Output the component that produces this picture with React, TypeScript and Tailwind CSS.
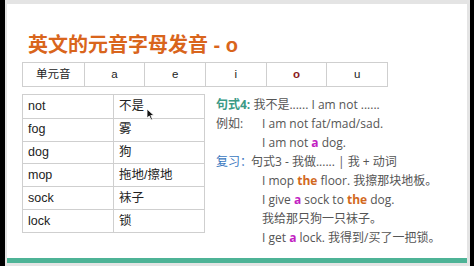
import React from "react";

const cjk = '"Noto Sans CJK SC"';
const A = ({ children }: { children: React.ReactNode }) => (
  <span className="font-bold text-[#c21fc2]">{children}</span>
);
const T = ({ children }: { children: React.ReactNode }) => (
  <span className="font-bold text-[#d2691e]">{children}</span>
);

export default function App() {
  const vowels = ["单元音", "a", "e", "i", "o", "u"];
  const words: [string, string][] = [
    ["not", "不是"],
    ["fog", "雾"],
    ["dog", "狗"],
    ["mop", "拖地/擦地"],
    ["sock", "袜子"],
    ["lock", "锁"],
  ];
  return (
    <div className="w-[474px] h-[266px] bg-black flex overflow-hidden">
      <div className="ml-[5px] w-[465px] h-full bg-[#e4e4e4] pl-[2px] pr-[3px] pt-[4px] pb-[3px] flex flex-col">
        <div className="relative flex-1 min-h-0 bg-white flex flex-col overflow-hidden">
          <div className="flex-1 min-h-0 flex flex-col pl-[15px]">
            <div
              className="mt-[29px] ml-[6px] h-[24px] text-[20px] leading-[24px] font-bold text-[#d9651c]"
              style={{ fontFamily: `"Liberation Sans", ${cjk}, sans-serif` }}
            >
              英文的元音字母发音 - o
            </div>
            <div
              className="mt-[5px] flex w-[366px] border border-[#cfcfcf] h-[25px]"
              style={{ fontFamily: `"Liberation Sans", ${cjk}, sans-serif` }}
            >
              {vowels.map((v, i) => (
                <div
                  key={v}
                  className={`w-[61px] flex items-center justify-center text-[11.5px] ${
                    i > 0 ? "border-l border-[#cfcfcf]" : ""
                  } ${v === "o" ? "font-bold text-[#8b1a1a]" : "text-[#222]"}`}
                >
                  {v}
                </div>
              ))}
            </div>
            <div className="mt-[7px] flex">
              <div
                className="w-[183px] h-[139px] shrink-0 border border-[#cfcfcf] flex flex-col"
                style={{ fontFamily: `"Liberation Sans", ${cjk}, sans-serif` }}
              >
                {words.map(([w, c], i) => (
                  <div
                    key={w}
                    className={`flex h-[23px] ${i > 0 ? "border-t border-[#cfcfcf]" : ""}`}
                  >
                    <div className="w-[91px] border-r border-[#cfcfcf] flex items-center pl-[5px] text-[12.5px] text-[#222]">
                      {w}
                    </div>
                    <div className="flex-1 flex items-center pl-[5px] text-[12.5px] text-[#222]">
                      {c}
                    </div>
                  </div>
                ))}
              </div>
              <div
                className="ml-[11px] mt-[1px] flex flex-col text-[12px] leading-[19px] text-[#555] whitespace-nowrap"
                style={{ fontFamily: `"Open Sans", ${cjk}, sans-serif` }}
              >
                <div>
                  <span className="font-bold text-[#3a9a86]">句式4:</span> 我不是...... I am not ......
                </div>
                <div className="flex">
                  <span className="w-[46px] shrink-0">例如:</span>
                  <span>I am not fat/mad/sad.</span>
                </div>
                <div className="pl-[46px]">
                  I am not <A>a</A> dog.
                </div>
                <div className="flex">
                  <span className="w-[35px] shrink-0 text-[#3a78c0]">复习：</span>
                  <span>句式3 - 我做...... | 我 + 动词</span>
                </div>
                <div className="pl-[46px]">
                  I mop <T>the</T> floor. 我擦那块地板。
                </div>
                <div className="pl-[46px]">
                  I give <A>a</A> sock to <T>the</T> dog.
                </div>
                <div className="pl-[46px]">我给那只狗一只袜子。</div>
                <div className="pl-[46px]">
                  I get <A>a</A> lock. 我得到/买了一把锁。
                </div>
              </div>
            </div>
          </div>
          <div className="h-[5px] shrink-0 bg-[#4db396]" />
          <svg
            className="absolute left-[139px] top-[104px]"
            width="9"
            height="13"
            viewBox="0 0 9 13"
          >
            <path d="M1 1 L1 10 L3.3 8 L5 12 L6.5 11.3 L4.8 7.5 L8 7.5 Z" fill="#111" stroke="#fff" strokeWidth="0.8" />
          </svg>
        </div>
      </div>
    </div>
  );
}
